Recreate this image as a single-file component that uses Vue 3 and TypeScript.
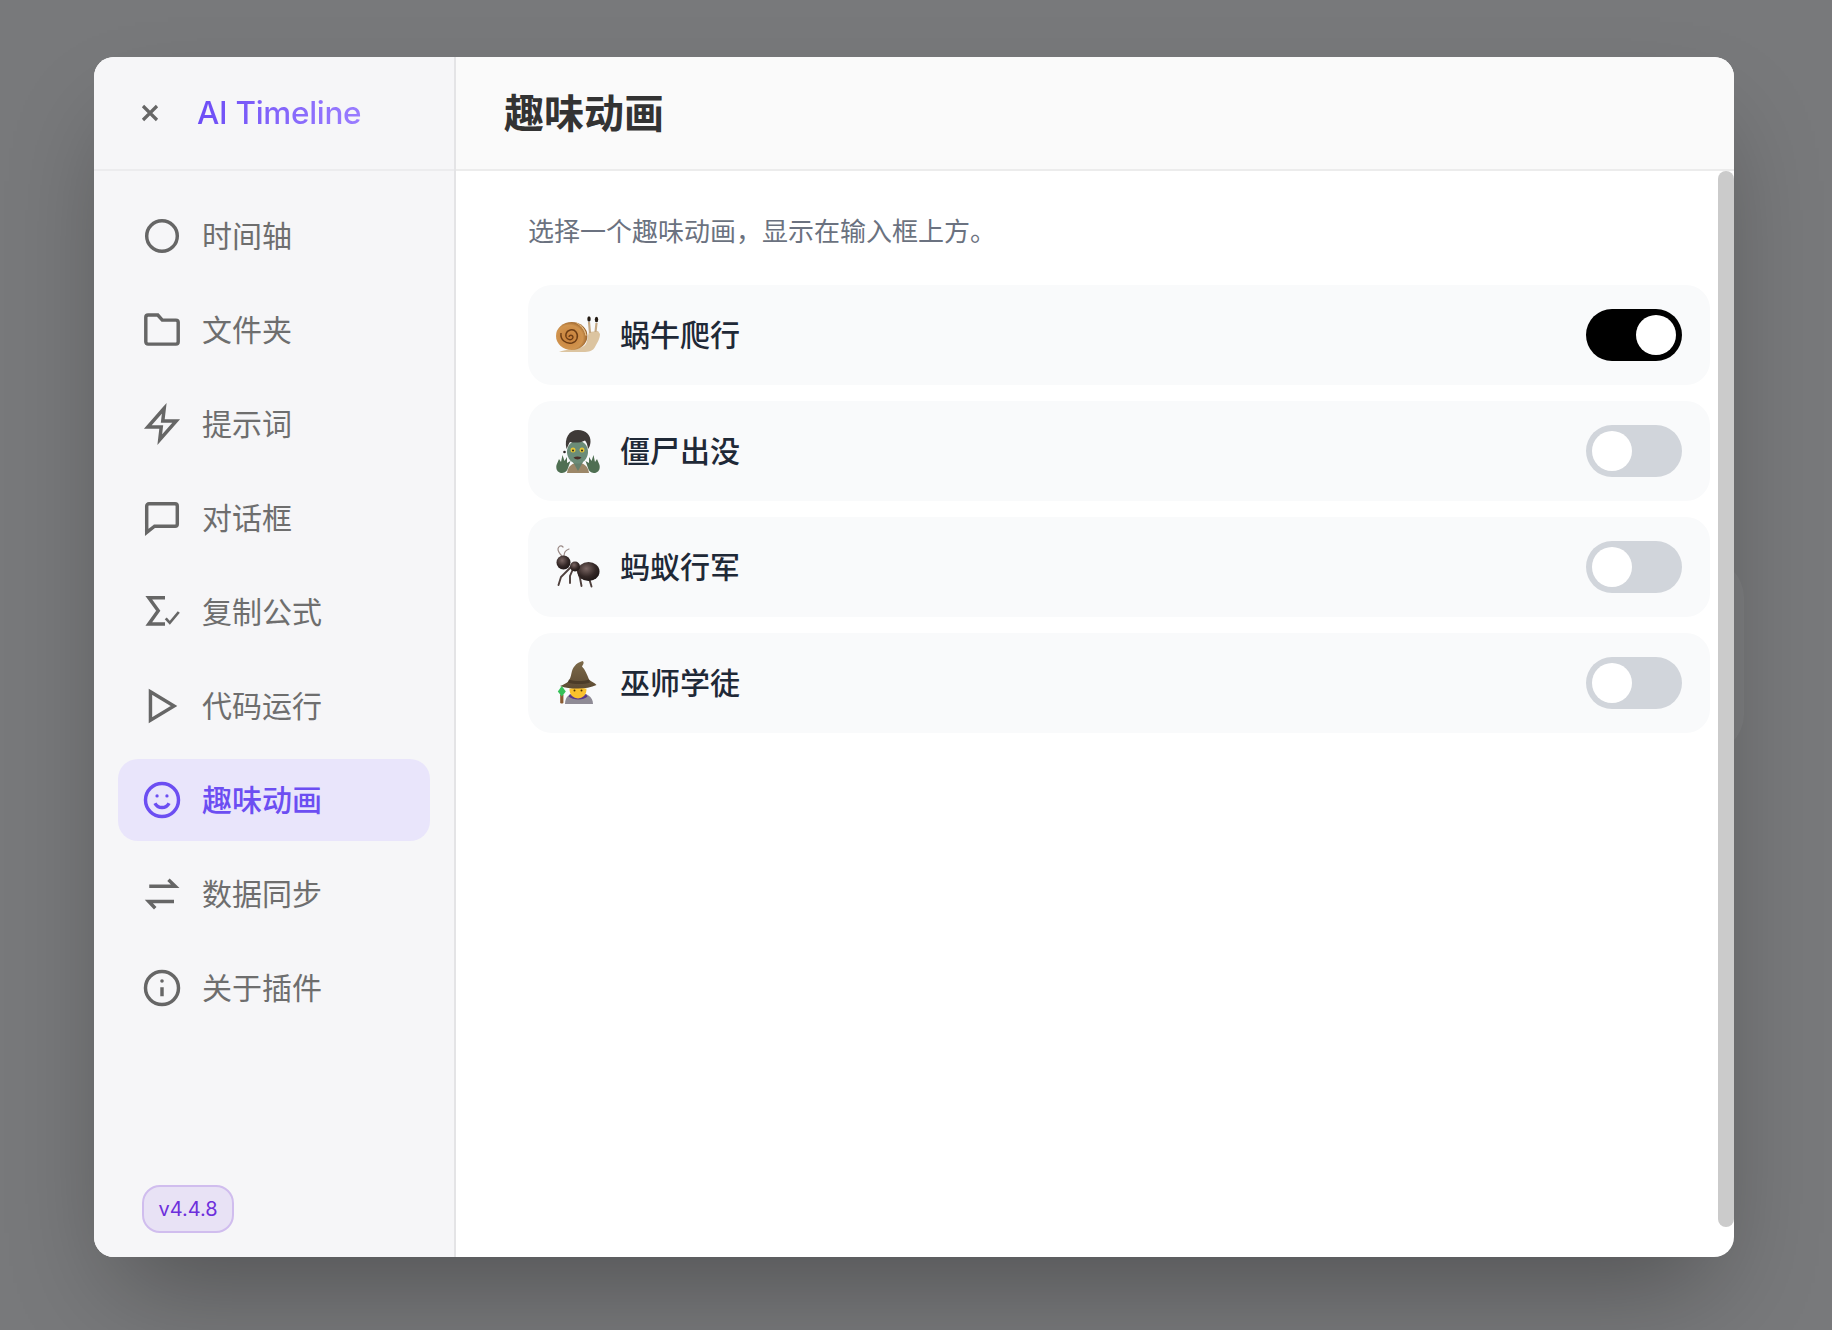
<script setup lang="ts">
interface NavItem { label: string; icon: string; active?: boolean }
interface Anim { label: string; emoji: string; on: boolean }

const nav: NavItem[] = [
  { label: '时间轴', icon: 'clock' },
  { label: '文件夹', icon: 'folder' },
  { label: '提示词', icon: 'bolt' },
  { label: '对话框', icon: 'chat' },
  { label: '复制公式', icon: 'sigma' },
  { label: '代码运行', icon: 'play' },
  { label: '趣味动画', icon: 'smile', active: true },
  { label: '数据同步', icon: 'swap' },
  { label: '关于插件', icon: 'info' },
]
const anims: Anim[] = [
  { label: '蜗牛爬行', emoji: 'snail', on: true },
  { label: '僵尸出没', emoji: 'zombie', on: false },
  { label: '蚂蚁行军', emoji: 'ant', on: false },
  { label: '巫师学徒', emoji: 'mage', on: false },
]
</script>

<template>
  <div class="backdrop">
    <div class="ghost"></div>
    <div class="modal">
      <aside class="side">
        <div class="side-head">
          <svg class="close" viewBox="0 0 18 18"><path d="M2 2 16 16M16 2 2 16" /></svg>
          <span class="brand">AI Timeline</span>
        </div>
        <nav class="nav">
          <div v-for="n in nav" :key="n.label" class="nav-item" :class="{ active: n.active }">
            <svg class="ico" viewBox="0 0 24 24">
              <circle v-if="n.icon === 'clock'" cx="12" cy="12" r="10.2" />
              <path v-else-if="n.icon === 'folder'" d="M1.200 3.500A1.500 1.500 0 0 1 2.700 2h6.500l3 3.400h9.100a1.500 1.500 0 0 1 1.500 1.500v13a1.500 1.500 0 0 1-1.500 1.500H2.700a1.500 1.500 0 0 1-1.500-1.500z" />
              <path v-else-if="n.icon === 'bolt'" d="M13.500 1.500 2.500 14h9l-1 8.500 11-12.500h-9z" />
              <path v-else-if="n.icon === 'chat'" d="M7 17.500 1.800 21.600V4a1.500 1.500 0 0 1 1.500-1.500h17.400a1.500 1.500 0 0 1 1.500 1.500v12a1.500 1.500 0 0 1-1.500 1.500z" />
              <template v-else-if="n.icon === 'sigma'">
                <path d="M14 2.500H3.200l6.300 8.700-6.300 8.800H14" />
                <path d="M14.500 16.200l2.700 3 6-7.200" class="thin" />
              </template>
              <path v-else-if="n.icon === 'play'" d="M4.300 2.500 20 12 4.300 21.500z" />
              <template v-else-if="n.icon === 'smile'">
                <circle cx="12" cy="12" r="11" />
                <path d="M7.300 14.200a5.300 5.300 0 0 0 9.400 0" />
                <circle cx="8.700" cy="9.300" r="1.100" class="dot" />
                <circle cx="15.300" cy="9.300" r="1.100" class="dot" />
              </template>
              <template v-else-if="n.icon === 'swap'">
                <path d="M3.500 6.800H20.800L16.300 2.500" />
                <path d="M20 17H3.200L7.500 21.500" />
              </template>
              <template v-else-if="n.icon === 'info'">
                <circle cx="12" cy="12" r="11" />
                <path d="M12 11.500V17.500" />
                <circle cx="12" cy="7.300" r="1.200" class="dot" />
              </template>
            </svg>
            <span class="nav-label">{{ n.label }}</span>
          </div>
        </nav>
        <div class="side-foot"><span class="ver">v4.4.8</span></div>
      </aside>

      <section class="main">
        <header class="main-head"><h1>趣味动画</h1></header>
        <div class="main-body">
          <p class="desc">选择一个趣味动画，显示在输入框上方。</p>
          <div class="list">
            <div v-for="a in anims" :key="a.label" class="row">
              <svg class="emoji" viewBox="0 0 44 44">
                <defs>
                  <radialGradient id="shell" cx=".42" cy=".55" r=".62">
                    <stop offset="0" stop-color="#c9803a" />
                    <stop offset=".7" stop-color="#d0944f" />
                    <stop offset="1" stop-color="#8a5522" />
                  </radialGradient>
                  <radialGradient id="antb" cx=".4" cy=".35" r=".7">
                    <stop offset="0" stop-color="#7a6663" />
                    <stop offset=".6" stop-color="#342826" />
                    <stop offset="1" stop-color="#1c1514" />
                  </radialGradient>
                  <linearGradient id="hat" x1="0" y1="0" x2="0" y2="1">
                    <stop offset="0" stop-color="#7d6a4a" />
                    <stop offset="1" stop-color="#5d4b33" />
                  </linearGradient>
                </defs>
                <template v-if="a.emoji === 'snail'">
                  <path d="M3 39c7-3 19-2 25-6 4-3 3-9 5-14l9-1 2 3c0 5-3 9-5 13-2 4-6 5-12 5H6c-2 0-3 0-3 0z" fill="#dcc4a0" />
                  <path d="M34 20 33 9M39.500 19l1-9" stroke="#c4a884" stroke-width="2.200" fill="none" />
                  <ellipse cx="33" cy="6" rx="1.700" ry="2.800" fill="#241b14" />
                  <ellipse cx="40.500" cy="6.500" rx="1.700" ry="2.800" fill="#241b14" />
                  <ellipse cx="15.700" cy="23" rx="15.700" ry="14" fill="url(#shell)" />
                  <path d="M20 9.500c5 3 9 7 10 13M24 11.500c3 3 5 6 6 11" stroke="#e7c08a" stroke-width="1" fill="none" />
                  <path d="M13 24a2 2 0 1 1 3 2c-3 2-7-1-6-5 1-4 7-6 10-2 3 4 1 10-4 11-6 1-12-3-11-10" stroke="#6d3d15" stroke-width="1.400" fill="none" />
                </template>
                <template v-else-if="a.emoji === 'zombie'">
                  <path d="M11 44c1-7 5-10 11-10s10 3 11 10z" fill="#9c8768" />
                  <path d="M22 42l-5-9h10z" fill="#66806c" />
                  <ellipse cx="21.500" cy="23" rx="10.500" ry="11.500" fill="#6b8c78" />
                  <path d="M10.500 20C8 9 13 1 22 1c8 0 13 5 12.500 12-.2 3-1 5-2.500 7-.5-4-1.500-7-3-8.500C24 14 18 14 14 13c-1.500 2-2 4-3.500 7z" fill="#3f3a38" />
                  <circle cx="8.500" cy="23" r="1.300" fill="#2c2725" />
                  <circle cx="17" cy="21" r="2.500" fill="#e3c537" />
                  <circle cx="26" cy="21" r="2.500" fill="#e3c537" />
                  <circle cx="17" cy="21.500" r="1" fill="#2a2a20" />
                  <circle cx="26" cy="21.500" r="1" fill="#2a2a20" />
                  <path d="M17.500 28.500c2.500-1.200 5.500-1.200 8 0-2 2.500-6 2.500-8 0z" fill="#4a2f2a" />
                  <path d="M.5 36 3 30l2 3 1.500-7 2 6 2.500-4 0 6 3.500-2-2.500 7c-1 4-4 5-7 5-3-.500-5.500-3-4.500-8zM43.500 36 41 30l-2 3-1.500-7-2 6L33 28l0 6-3.500-2 2.500 7c1 4 4 5 7 5 3-.500 5.500-3 4.500-8z" fill="#4f6f52" />
                </template>
                <template v-else-if="a.emoji === 'ant'">
                  <g fill="none" stroke="#4f403d" stroke-width="1.900" stroke-linecap="round">
                    <path d="M6 11C3 8 1 5 2.500 2.500 4 0 6 1 7 2" stroke="#9a8985" stroke-width="1.200" />
                    <path d="M8 11c0-3 2-6 5-7" stroke="#9a8985" stroke-width="1.200" />
                    <path d="M15 22 5 32 2.500 40" />
                    <path d="M17 24 14 31 14 38" />
                    <path d="M21 24 24 33 25.500 41" />
                    <path d="M25 24 33 33 35.500 41.500" />
                  </g>
                  <ellipse cx="32.500" cy="26.500" rx="11" ry="9.500" fill="url(#antb)" />
                  <circle cx="19" cy="21.500" r="5" fill="url(#antb)" />
                  <circle cx="7.500" cy="17.500" r="7" fill="url(#antb)" />
                </template>
                <template v-else>
                  <path d="M9 43c0-8 5-11 13-11s15 3 15 11z" fill="#8f8b95" />
                  <path d="M14 33c3 3.500 13 3.500 16 0l1.500 2.500c-4 4-14 4-19 0z" fill="#5b3a8a" />
                  <circle cx="22" cy="29" r="8.500" fill="#fbc22d" />
                  <circle cx="18.500" cy="29.500" r="1" fill="#4d3306" />
                  <circle cx="25.500" cy="29.500" r="1" fill="#4d3306" />
                  <path d="M14 25c5-2 11-2 16 0v3c-5-2-11-2-16 0z" fill="#f0e0b5" />
                  <path d="M4 25c8-3 10-5 11.500-13 1-5 4-10 11-12 2 1 1 3-.500 5.500 3 3 5 8 7 13 2 2 6 3.500 7.500 5.500-5 2.500-12 3.500-18.500 3.500-7 0-13-.500-18-2.500z" fill="url(#hat)" />
                  <path d="M13 18.500c6 2 14 2 20 0l1 3c-6 2-16 2-22 0z" fill="#4c3c28" />
                  <rect x="4.200" y="33" width="3.200" height="9.500" rx="1.200" fill="#8a5a30" />
                  <path d="M5.800 25 9.800 30.500 5.800 35.500 1.800 30.500z" fill="#36c158" />
                </template>
              </svg>
              <span class="row-label">{{ a.label }}</span>
              <span class="toggle" :class="{ on: a.on }"><i class="knob"></i></span>
            </div>
          </div>
          <div class="thumb"></div>
        </div>
      </section>
    </div>
  </div>
</template>

<style scoped>
.backdrop {
  position: relative;
  box-sizing: border-box;
  width: 1832px;
  height: 1330px;
  padding: 57px 98px 73px 94px;
  background: #78797b;
  overflow: hidden;
  font-family: "Noto Sans CJK SC", "Inter", sans-serif;
}
.ghost {
  position: absolute;
  left: 1660px;
  top: 558px;
  width: 84px;
  height: 196px;
  border-radius: 40px;
  background: rgba(255, 255, 255, 0.04);
}
.modal {
  position: relative;
  display: flex;
  height: 1200px;
  border-radius: 20px;
  overflow: hidden;
  background: #fff;
}
.backdrop::before {
  content: "";
  position: absolute;
  left: 94px;
  top: 57px;
  width: 1640px;
  height: 1200px;
  border-radius: 20px;
  box-shadow: 0 50px 100px -24px rgba(0, 0, 0, 0.32);
}
.side {
  box-sizing: border-box;
  width: 362px;
  flex: none;
  display: flex;
  flex-direction: column;
  background: #f6f6f8;
  border-right: 2px solid #e4e4e6;
}
.side-head {
  box-sizing: border-box;
  height: 114px;
  display: flex;
  align-items: center;
  padding-left: 47px;
  border-bottom: 2px solid #ececee;
}
.close {
  width: 18px;
  height: 18px;
  fill: none;
  stroke: #666;
  stroke-width: 3.200;
}
.brand {
  margin-left: 38px;
  padding-bottom: 1px;
  font-family: "Inter", sans-serif;
  font-size: 31.500px;
  font-weight: 500;
  letter-spacing: -0.3px;
  background: linear-gradient(90deg, #6d4df6, #9a7dff);
  -webkit-background-clip: text;
  background-clip: text;
  color: transparent;
}
.nav {
  flex: 1;
  display: flex;
  flex-direction: column;
  gap: 12px;
  padding: 24px 24px 0;
}
.nav-item {
  height: 82px;
  display: flex;
  align-items: center;
  padding-left: 26px;
  gap: 22px;
  border-radius: 20px;
  color: #666;
}
.nav-item.active {
  background: #e9e5fb;
  color: #6c4ef2;
}
.ico {
  width: 36px;
  height: 36px;
  flex: none;
  fill: none;
  stroke: currentColor;
  stroke-width: 2.300;
  overflow: visible;
}
.ico .dot {
  fill: currentColor;
  stroke: none;
}
.ico .thin {
  stroke-width: 1.800;
}
.nav-label {
  padding-bottom: 4px;
  font-size: 30px;
  line-height: 40px;
  font-weight: 400;
  color: #6e6e6e;
}
.active .nav-label {
  font-weight: 500;
  color: #6c4ef2;
}
.side-foot {
  padding: 0 0 24px 48px;
}
.ver {
  box-sizing: border-box;
  display: inline-flex;
  align-items: center;
  justify-content: center;
  width: 92px;
  height: 48px;
  border-radius: 18px;
  border: 2px solid #d0bdee;
  background: #e8e2f5;
  color: #6d2fdc;
  font-family: "Inter", sans-serif;
  font-size: 20px;
}
.main {
  flex: 1;
  min-width: 0;
  display: flex;
  flex-direction: column;
}
.main-head {
  box-sizing: border-box;
  height: 114px;
  display: flex;
  align-items: center;
  padding-left: 48px;
  padding-bottom: 4px;
  background: #fafafa;
  border-bottom: 2px solid #ececec;
}
h1 {
  margin: 0;
  font-size: 40px;
  font-weight: 600;
  color: #333;
}
.main-body {
  position: relative;
  flex: 1;
  padding: 40px 24px 0 72px;
}
.desc {
  margin: 0 0 36px;
  font-size: 26px;
  line-height: 38px;
  color: #6b7280;
}
.list {
  display: flex;
  flex-direction: column;
  gap: 16px;
}
.row {
  box-sizing: border-box;
  height: 100px;
  display: flex;
  align-items: center;
  padding: 0 28px;
  border-radius: 24px;
  background: #f9fafb;
}
.emoji {
  width: 44px;
  height: 44px;
  flex: none;
}
.row-label {
  margin-left: 20px;
  padding-bottom: 4px;
  font-size: 30px;
  font-weight: 500;
  color: #1f2937;
}
.toggle {
  margin-left: auto;
  position: relative;
  width: 96px;
  height: 52px;
  border-radius: 26px;
  background: #d1d5db;
}
.toggle.on {
  background: #000;
}
.knob {
  position: absolute;
  left: 6px;
  top: 6px;
  width: 40px;
  height: 40px;
  border-radius: 50%;
  background: #fff;
}
.on .knob {
  left: 50px;
}
.thumb {
  position: absolute;
  right: 0;
  top: 0;
  bottom: 30px;
  width: 16px;
  border-radius: 8px;
  background: #cbcbcb;
}
</style>
